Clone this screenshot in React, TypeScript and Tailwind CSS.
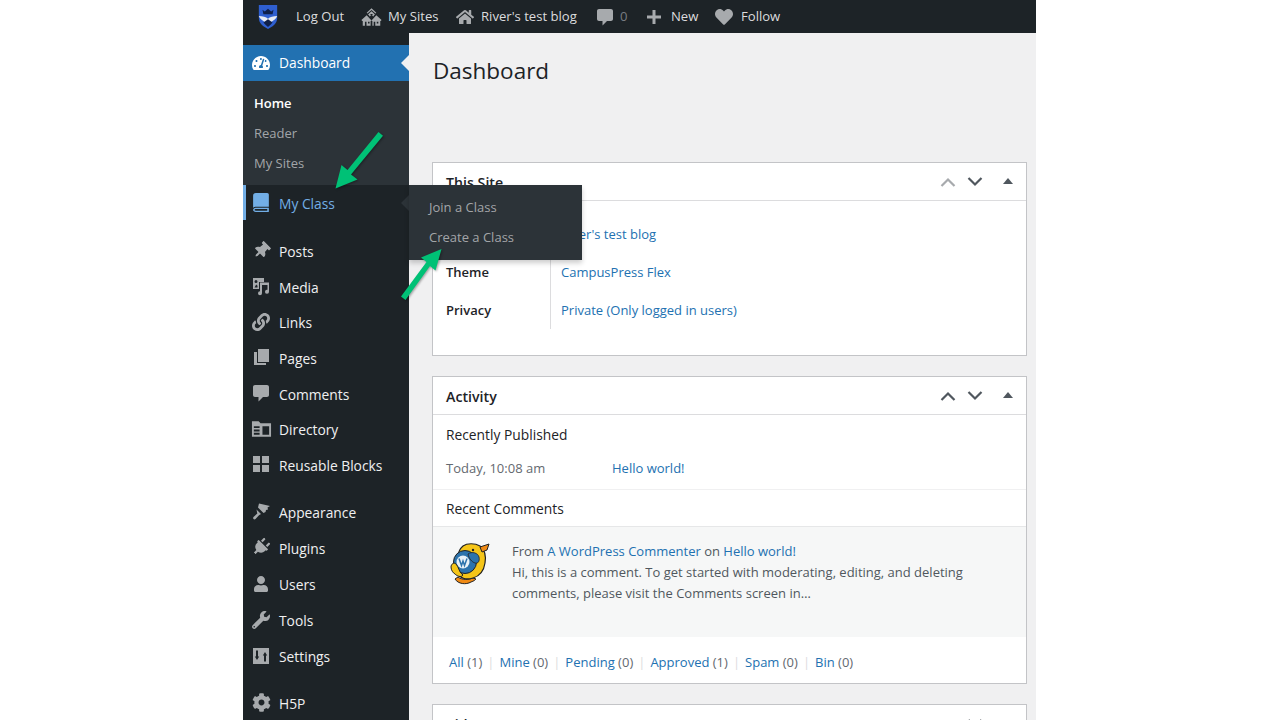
import type { ReactNode } from "react";
import { FaHeart, FaHome, FaLink, FaPlug, FaTachometerAlt, FaThumbtack, FaUser, FaWrench, FaCog } from "react-icons/fa";

const FONT = "font-['Open_Sans','Noto_Sans',sans-serif]";

const BubbleIcon = ({ className }: { className?: string }) => (
  <svg viewBox="0 0 20 20" className={className} fill="currentColor">
    <path d="M4 2h12c1.100 0 2 .9 2 2v8c0 1.100-.9 2-2 2h-4l-4.500 4.500V14H4c-1.100 0-2-.9-2-2V4c0-1.100.9-2 2-2z" />
  </svg>
);

const MultisiteIcon = ({ className }: { className?: string }) => (
  <svg viewBox="0 0 24 20" className={className} fill="currentColor">
    <path fillRule="evenodd" d="M12 0l5.500 5-1 1.100L12 2 7.500 6.100l-1-1.100z" />
    <path fillRule="evenodd" d="M12 3.500l4 3.700-1 .8-1 1.500-2-1.800-2 1.800-1-1.500-1-.8zM10.800 6.500v1.600h2.400V6.500z" />
    <path fillRule="evenodd" d="M6.500 8L.5 13.500l.9 1H2V20h9v-5.500h.6l.4-.5-5.500-6zM4.500 15.500h1.800V20H4.500zm3.500 0h1.800v2H8z" />
    <path fillRule="evenodd" d="M17.500 8L12 14l.4.5h.6V20h9v-5.500h.6l.9-1L17.500 8zM14.500 15.500h1.800V20h-1.800zm3.500 0h1.800v2H18z" />
  </svg>
);

const BookIcon = () => (
  <svg viewBox="0 0 20 20" className="h-[21px] w-[21px] text-[#72aee6]" fill="currentColor">
    <path d="M4.500 1h11c.8 0 1.500.7 1.500 1.500V14H4.500C3.500 14 2.800 14.300 2 15V3.500C2 2 3 1 4.500 1z" />
    <path d="M4.500 15H17v3.500c0 .3-.2.500-.5.500h-12C3 19 2 18 2 17.200 2 16 3 15 4.500 15zm0 1.300c-.6 0-1.100.4-1.100.9 0 .5.500.6 1.100.6h11v-1.500z" />
  </svg>
);

const MediaIcon = () => (
  <svg viewBox="0 0 20 20" className="h-5 w-5" fill="currentColor">
    <path fillRule="evenodd" d="M2 2h11v4H8v7H2V2zm3 2a1.500 1.500 0 1 0 0 3 1.500 1.500 0 0 0 0-3zM3.500 11.500h3V9.800L5.200 8.500z" />
    <path d="M9 7.500h9v9.200a2 2 0 1 1-1.500-1.900V10H11v8.200a2 2 0 1 1-2-2V7.500z" transform="translate(0 -1)" />
  </svg>
);

const PagesIcon = () => (
  <svg viewBox="0 0 20 20" className="h-5 w-5" fill="currentColor">
    <path d="M7 2h11v13H7z" />
    <path d="M3 5h3v11h9v2H3z" />
  </svg>
);

const DirectoryIcon = () => (
  <svg viewBox="0 0 22 20" className="h-5 w-[21px]" fill="currentColor">
    <path fillRule="evenodd" d="M1 2h7l2 2h11v14H1V2zm2 5v2h6V7H3zm0 3.500v2h6v-2H3zm0 3.500v2h6v-2H3zm9-7v9h7V7h-7z" />
  </svg>
);

const BlocksIcon = () => (
  <svg viewBox="0 0 20 20" className="h-5 w-5" fill="currentColor">
    <path d="M2 2h7v7H2zM11 2h7v7h-7zM2 11h7v7H2zM11 11h7v7h-7z" />
  </svg>
);

const BrushIcon = () => (
  <svg viewBox="0 0 20 20" className="h-5 w-5" fill="currentColor">
    <path d="M8 2.500l11 2.500-2.500 1.500.5 2-2 .5-.5 2-2 1-5.500-5.500z" />
    <path d="M5.500 8.500l4.500 4.500-2 1.200-3.500 3.800c-.6.5-1.500.500-2 0s-.5-1.400 0-2l3.800-3.500z" />
  </svg>
);

const SlidersIcon = () => (
  <svg viewBox="0 0 20 20" className="h-5 w-5" fill="currentColor">
    <path fillRule="evenodd" d="M2 2h16v16H2V2zM5 4.500v6H3.800L6 14l2.200-3.500H7v-6H5zM13 15.500v-6h-1.200L14 6l2.200 3.500H15v6h-2z" />
  </svg>
);

const Logo = () => (
  <svg viewBox="0 0 24 28" className="h-[28px] w-[22px]">
    <path d="M2 1h20v14c0 6-5 9.500-10 12C7 24.500 2 21 2 15V1z" fill="#2f5fd0" />
    <path d="M6 6l2.500 2L12 5l3.500 3L18 6l-1 5H7z" fill="#10204a" />
    <path d="M2 13c4 0 8 1 10 3 2-2 6-3 10-3-1 3-4 5-6.500 6.500L12 22l-3.500-2.500C6 18 3 16 2 13z" fill="#e8ecf5" />
    <path d="M7 20l5-3.500 5 3.500c-1.500 2-3.500 3.500-5 5-1.500-1.500-3.500-3-5-5z" fill="#10204a" />
  </svg>
);

const Wapuu = () => (
  <svg viewBox="0 0 44 46" className="h-[46px] w-[44px] shrink-0">
    <path d="M7 38c3 5 11 6 16 3 3-1 4-2 5-3l-3-1c-5 2-11 2-15-1z" fill="#f08a14" stroke="#222" strokeWidth="1" />
    <path d="M15 5c4-3 12-3 17 0 5 4 6 11 5 17-1 7-5 13-12 15-6 2-13 1-15-5C7 23 9 10 15 5z" fill="#f5c518" stroke="#222" strokeWidth="1.200" />
    <path d="M32 6l9-3-2 6-5 2z" fill="#f08a14" stroke="#222" strokeWidth="1" />
    <circle cx="17" cy="21" r="11.500" fill="#2c73ac" stroke="#222" strokeWidth="1" />
    <circle cx="15" cy="21" r="6.500" fill="#e8f1f7" />
    <path d="M11 17.500l2.500 7 1.500-4.500 1.500 4.500 2.500-7" fill="none" stroke="#2c73ac" strokeWidth="1.500" />
    <path d="M3 26c0-3 3-5 5-3 3 3 3 9 7 11-2 3-6 1-8-1-2-1-4-4-4-7z" fill="#f5c518" stroke="#222" strokeWidth="1" />
    <path d="M20 13c4-3 10-1 11 3s-1 7-4 6c-3-1-6-4-7-9z" fill="#2c73ac" stroke="#222" strokeWidth=".8" />
    <circle cx="25" cy="9" r="1.200" fill="#222" />
  </svg>
);

const TopBar = () => (
  <div className="flex h-[33px] items-center bg-[#1d2327] pl-[14px] text-[13.100px] text-[#dcdcde]">
    <Logo />
    <span className="ml-[17px] w-[65px]">Log Out</span>
    <MultisiteIcon className="h-[20px] w-[21px] text-[#a7aaad]" />
    <span className="ml-[6px] w-[68px]">My Sites</span>
    <FaHome className="h-[18px] w-[18px] text-[#a7aaad]" />
    <span className="ml-[7px] w-[114px]">River's test blog</span>
    <BubbleIcon className="h-5 w-5 text-[#a7aaad]" />
    <span className="ml-[5px] w-[26px] text-[#787c82]">0</span>
    <svg viewBox="0 0 16 16" className="h-[16px] w-[16px] text-[#a7aaad]" fill="currentColor">
      <path d="M6.500 1h3v5.500H15v3H9.500V15h-3V9.500H1v-3h5.500z" />
    </svg>
    <span className="ml-[9px] w-[44px]">New</span>
    <FaHeart className="h-[18px] w-[18px] text-[#a7aaad]" />
    <span className="ml-[8px]">Follow</span>
  </div>
);

const MenuRow = ({ icon, label, tall }: { icon: ReactNode; label: string; tall?: boolean }) => (
  <div className={`flex items-center text-[13.800px] text-[#f0f0f1] ${tall ? "h-[37px]" : "h-9"}`}>
    <span className="flex w-9 justify-center text-[#a7aaad]">{icon}</span>
    <span className="pt-[4px]">{label}</span>
  </div>
);

const Sidebar = () => (
  <div className="flex w-[166px] shrink-0 flex-col bg-[#1d2327] pt-3">
    <div className="relative flex h-9 items-center bg-[#2271b1] text-[13.800px] text-white">
      <span className="flex w-9 justify-center">
        <FaTachometerAlt className="h-[18px] w-[18px]" />
      </span>
      <span className="pt-[2px]">Dashboard</span>
      <span className="absolute right-0 top-[10px] h-0 w-0 border-y-[8px] border-r-[8px] border-y-transparent border-r-[#f0f0f1]" />
    </div>
    <div className="flex h-[105px] flex-col bg-[#2c3338] pl-[11px] pt-[9px] text-[13px] text-[#c3c4c7]/80">
      <div className="flex h-[29px] items-center font-semibold text-white">Home</div>
      <div className="flex h-[30px] items-center">Reader</div>
      <div className="flex h-[30px] items-center">My Sites</div>
    </div>
    <div className="relative flex h-9 items-center bg-[#1d2327] text-[13.800px] text-[#72aee6]">
      <span className="absolute left-0 top-0 h-full w-[3px] bg-[#72aee6]" />
      <span className="flex w-9 justify-center">
        <BookIcon />
      </span>
      <span className="pt-[3px]">My Class</span>
      <span className="absolute right-0 top-[10px] h-0 w-0 border-y-[8px] border-r-[8px] border-y-transparent border-r-[#2c3338]" />
    </div>
    <div className="h-[12px]" />
    <MenuRow icon={<FaThumbtack className="h-[17px] w-[17px] rotate-45" />} label="Posts" />
    <MenuRow icon={<MediaIcon />} label="Media" />
    <MenuRow icon={<FaLink className="h-[18px] w-[18px]" />} label="Links" />
    <MenuRow icon={<PagesIcon />} label="Pages" />
    <MenuRow icon={<BubbleIcon className="h-5 w-5" />} label="Comments" />
    <MenuRow icon={<DirectoryIcon />} label="Directory" />
    <MenuRow icon={<BlocksIcon />} label="Reusable Blocks" />
    <div className="h-[11px]" />
    <MenuRow icon={<BrushIcon />} label="Appearance" tall />
    <MenuRow icon={<FaPlug className="h-[18px] w-[18px] rotate-45" />} label="Plugins" />
    <MenuRow icon={<FaUser className="h-[16px] w-[16px]" />} label="Users" tall />
    <MenuRow icon={<FaWrench className="h-[18px] w-[18px]" />} label="Tools" />
    <MenuRow icon={<SlidersIcon />} label="Settings" />
    <div className="h-[11px]" />
    <MenuRow icon={<FaCog className="h-[19px] w-[19px]" />} label="H5P" />
  </div>
);

const Handles = ({ dim }: { dim?: boolean }) => (
  <div className="flex items-center">
    <svg viewBox="0 0 16 10" className={`h-[10px] w-4 ${dim ? "text-[#a7aaad]" : "text-[#50575e]"}`} fill="none" stroke="currentColor" strokeWidth="2.200">
      <path d="M1.500 9L8 2.500 14.500 9" />
    </svg>
    <svg viewBox="0 0 16 10" className="ml-[11px] h-[10px] w-4 text-[#50575e]" fill="none" stroke="currentColor" strokeWidth="2.200">
      <path d="M1.500 1L8 7.500 14.500 1" />
    </svg>
    <span className="ml-[20px] mb-[2px] mr-[13px] h-0 w-0 border-x-[5px] border-b-[6px] border-x-transparent border-b-[#50575e]" />
  </div>
);

const Card = ({ title, dim, children, className }: { title: string; dim?: boolean; children?: ReactNode; className?: string }) => (
  <div className={`border border-[#c3c4c7] bg-white ${className ?? ""}`}>
    <div className="flex h-[38px] items-center justify-between border-b border-[#dcdcde] pl-[13px]">
      <span className="pt-[2px] text-[14.200px] font-semibold text-[#1d2327]">{title}</span>
      <Handles dim={dim} />
    </div>
    {children}
  </div>
);

const SiteRow = ({ label, value }: { label: string; value: string }) => (
  <div className="flex h-[38px] items-center">
    <span className="w-[117px] pl-[13px] pt-[2px] text-[13px] font-semibold text-[#1d2327]">{label}</span>
    <span className="flex h-full items-center border-l border-[#dcdcde] pl-[10px] pt-[2px] text-[13px] text-[#2271b1]">{value}</span>
  </div>
);

const FooterLink = ({ label, count, last }: { label: string; count: string; last?: boolean }) => (
  <span className="flex whitespace-pre">
    <span className="text-[#2271b1]">{label}</span>
    <span className="text-[#646970]"> ({count})</span>
    {!last && <span className="mx-[5px] text-[#dcdcde]">|</span>}
  </span>
);

const Main = () => (
  <div className="min-w-0 flex-1 bg-[#f0f0f1] pl-[23px] pr-[9px]">
    <div className="flex h-[129px] items-start pl-[1px] pt-[18px] text-[22.500px] leading-[40px] text-[#1d2327]">Dashboard</div>
    <Card title="This Site" dim className="h-[194px]">
      <div className="pt-[14px]">
        <SiteRow label="Site" value="River's test blog" />
        <SiteRow label="Theme" value="CampusPress Flex" />
        <SiteRow label="Privacy" value="Private (Only logged in users)" />
      </div>
    </Card>
    <Card title="Activity" className="mt-[20px] h-[308px]">
      <div className="flex h-[39px] items-center pl-[13px] pt-[2px] text-[13.800px] text-[#1d2327]">Recently Published</div>
      <div className="flex h-[36px] items-start border-b border-[#f0f0f1] pl-[13px] pt-[5px] text-[13px]">
        <span className="w-[166px] text-[#646970]">Today, 10:08 am</span>
        <span className="text-[#2271b1]">Hello world!</span>
      </div>
      <div className="flex h-[37px] items-center border-b border-[#e6e7e8] pl-[13px] pt-[3px] text-[13.800px] text-[#1d2327]">Recent Comments</div>
      <div className="flex h-[110px] bg-[#f6f7f7] pl-[15px] pt-[14px]">
        <Wapuu />
        <div className="ml-[20px] text-[13px] leading-[21px] text-[#50575e]">
          <div>
            From <span className="text-[#2271b1]">A WordPress Commenter</span> on <span className="text-[#2271b1]">Hello world!</span>
          </div>
          <div>Hi, this is a comment. To get started with moderating, editing, and deleting</div>
          <div>comments, please visit the Comments screen in…</div>
        </div>
      </div>
      <div className="flex h-[44px] items-center pl-[16px] pt-[7px] text-[13px]">
        <FooterLink label="All" count="1" />
        <FooterLink label="Mine" count="0" />
        <FooterLink label="Pending" count="0" />
        <FooterLink label="Approved" count="1" />
        <FooterLink label="Spam" count="0" />
        <FooterLink label="Bin" count="0" last />
      </div>
    </Card>
    <Card title="Videos" className="mt-[20px] h-[60px]" />
  </div>
);

const Flyout = () => (
  <div className="absolute left-[166px] top-[185px] flex h-[75px] w-[173px] flex-col bg-[#2c3338] pl-[20px] pt-[8px] text-[13px] text-[#c3c4c7]/80 shadow-[0_3px_5px_rgba(0,0,0,0.2)]">
    <div className="flex h-[30px] items-center">Join a Class</div>
    <div className="flex h-[30px] items-center">Create a Class</div>
  </div>
);

const Arrows = () => (
  <svg viewBox="0 0 793 720" className="pointer-events-none absolute left-0 top-0 h-[720px] w-[793px]">
    <g fill="#00c176" style={{ filter: "drop-shadow(1px 1px 1px rgba(0,0,0,0.35))" }}>
      <path d="M135.500 132l4.500 3.800-32 38.700 6.500 5-22 9 6-23.500 6 5z" />
      <path d="M157 296.500l4.500 3.500 24.500-34 5.500 4.500 6-21.500-20.500 8.500 5.500 4.500z" transform="translate(1 0)" />
    </g>
  </svg>
);

export default function App() {
  return (
    <div className={`flex h-[720px] w-[1280px] overflow-hidden bg-white pl-[243px] ${FONT}`}>
      <div className="relative flex h-[720px] w-[793px] flex-col overflow-hidden">
        <TopBar />
        <div className="flex min-h-0 flex-1">
          <Sidebar />
          <Main />
        </div>
        <Flyout />
        <Arrows />
      </div>
    </div>
  );
}
